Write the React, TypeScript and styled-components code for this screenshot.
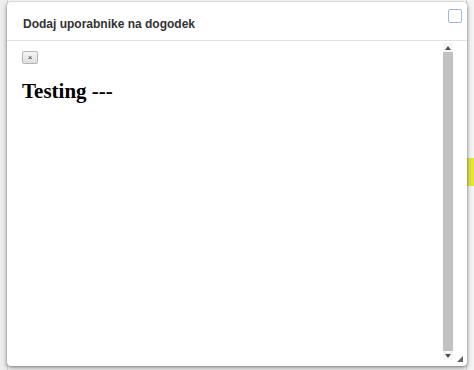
import React from 'react';
import styled, { createGlobalStyle } from 'styled-components';

const GlobalStyle = createGlobalStyle`
  html, body {
    margin: 0;
    padding: 0;
    background: #ffffff;
  }
`;

const Page = styled.div`
  position: relative;
  width: 474px;
  height: 370px;
  overflow: hidden;
  display: flex;
  justify-content: space-between;
  background: #fafafa;
`;

const Gutter = styled.div`
  width: 7px;
  display: flex;
  flex-direction: column;
  background: #eeeeee;
  border-right: 1px solid #dcdcdc;
`;

const RightGutter = styled.div`
  width: 7px;
  display: flex;
  flex-direction: column;
  background: #f4f4f4;
  border-left: 1px solid #dedede;
`;

const YellowTab = styled.div`
  margin-top: 158px;
  height: 28px;
  background: #e6e63a;
`;

const Dialog = styled.div`
  position: absolute;
  top: 2px;
  left: 7px;
  width: 460px;
  height: 364px;
  background: #ffffff;
  border-radius: 4px;
  box-shadow: 0 2px 5px rgba(0, 0, 0, 0.45), 0 0 2px rgba(0, 0, 0, 0.25);
  display: flex;
  flex-direction: column;
  box-sizing: border-box;
`;

const Header = styled.div`
  height: 39px;
  box-sizing: border-box;
  display: flex;
  justify-content: space-between;
  padding: 15px 5px 0 16px;
  border-bottom: 1px solid #e3e3e3;
`;

const Title = styled.h3`
  margin: 0;
  font-family: "Liberation Sans", Arial, sans-serif;
  font-size: 12px;
  font-weight: bold;
  line-height: 14px;
  color: #333333;
`;

const CloseBox = styled.span`
  display: block;
  width: 14px;
  height: 14px;
  margin-top: -8px;
  border: 1px solid #9db6e6;
  border-radius: 2px;
  background: #ffffff;
  box-sizing: border-box;
`;

const Body = styled.div`
  flex: 1;
  display: flex;
  padding: 2px 14px 6px 8px;
  min-height: 0;
`;

const Frame = styled.div`
  flex: 1;
  display: flex;
`;

const Content = styled.div`
  flex: 1;
  padding: 8px 7px;
`;

const SmallButton = styled.button`
  display: block;
  width: 16px;
  height: 13px;
  padding: 0;
  border: 1px solid #b4b4b4;
  border-radius: 2px;
  background: linear-gradient(#f6f6f6, #dedede);
  font-family: "Liberation Sans", Arial, sans-serif;
  font-size: 8px;
  line-height: 10px;
  color: #333;
`;

const Heading = styled.h1`
  margin: 15px 0 0;
  font-family: "Liberation Serif", "Times New Roman", serif;
  font-size: 21px;
  font-weight: bold;
  color: #000;
`;

const Scrollbar = styled.div`
  width: 10px;
  display: flex;
  flex-direction: column;
  background: #f7f7f7;
`;

const Arrow = styled.div`
  height: 9px;
  display: flex;
  align-items: center;
  justify-content: center;
`;

const Thumb = styled.div`
  flex: 1;
  background: #c1c1c1;
`;

const Grip = styled.svg`
  position: absolute;
  right: 4px;
  bottom: 4px;
`;

export default function App() {
  return (
    <>
      <GlobalStyle />
      <Page>
        <Gutter />
        <RightGutter>
          <YellowTab />
        </RightGutter>
        <Dialog>
          <Header>
            <Title>Dodaj uporabnike na dogodek</Title>
            <CloseBox aria-label="close" />
          </Header>
          <Body>
            <Frame>
              <Content>
                <SmallButton>×</SmallButton>
                <Heading>Testing ---</Heading>
              </Content>
              <Scrollbar>
                <Arrow>
                  <svg width="6" height="4" viewBox="0 0 6 4">
                    <path d="M0 4 L3 0 L6 4 Z" fill="#505050" />
                  </svg>
                </Arrow>
                <Thumb />
                <Arrow>
                  <svg width="6" height="4" viewBox="0 0 6 4">
                    <path d="M0 0 L3 4 L6 0 Z" fill="#505050" />
                  </svg>
                </Arrow>
              </Scrollbar>
            </Frame>
          </Body>
          <Grip width="6" height="6" viewBox="0 0 6 6">
            <path d="M6 0 L6 6 L0 6 Z" fill="#666" />
          </Grip>
        </Dialog>
      </Page>
    </>
  );
}
